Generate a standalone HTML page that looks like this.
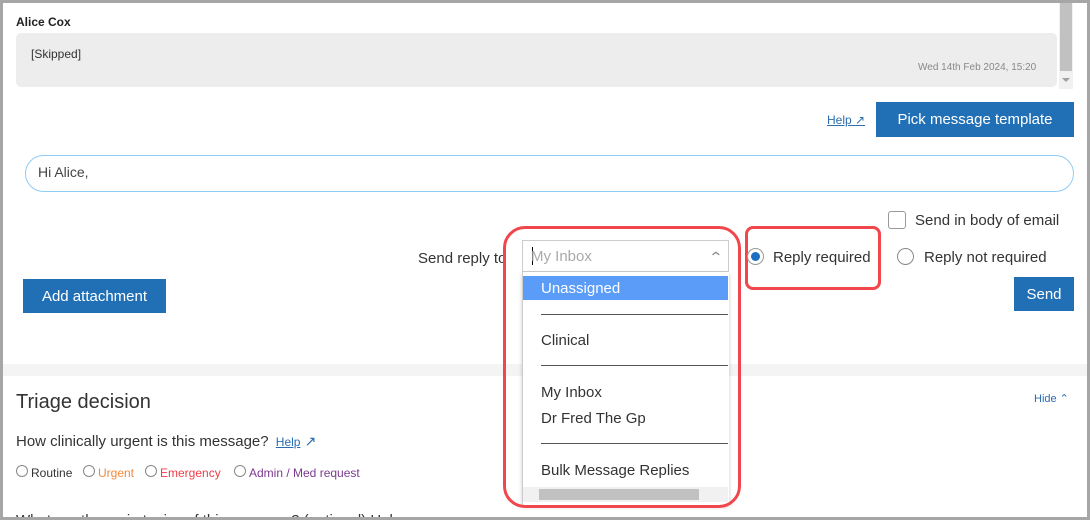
<!DOCTYPE html>
<html><head><meta charset="utf-8"><style>
*{box-sizing:border-box;margin:0;padding:0}
body{width:1090px;height:520px;overflow:hidden;background:#a6a6a6;font-family:"Liberation Sans",sans-serif;color:#333;position:relative}
.pg{position:absolute;left:3px;top:3px;width:1084px;height:514px;background:#fff;overflow:hidden}
.a{position:absolute;white-space:nowrap}
.btn{position:absolute;background:#2170b5;color:#fff;font-size:15px;display:flex;align-items:center;justify-content:center}
.rad{position:absolute;border:1px solid #888;border-radius:50%;background:#fff}
.help{color:#2a6db0;text-decoration:underline;font-size:12px}
</style></head><body><div class="pg">
<div class="a" style="left:0;top:361px;width:1084px;height:12px;background:#f4f4f4"></div>
<div class="a" style="left:13px;top:12px;font-size:12px;font-weight:bold;color:#222">Alice Cox</div>
<div class="a" style="left:13px;top:30px;width:1041px;height:54px;background:#ededed;border-radius:5px"></div>
<div class="a" style="left:28px;top:44px;font-size:12px;color:#333">[Skipped]</div>
<div class="a" style="left:915px;top:59px;font-size:10px;color:#888">Wed 14th Feb 2024, 15:20</div>
<div class="a" style="left:1056px;top:0;width:14px;height:86px;background:#f1f1f1"></div>
<div class="a" style="left:1057px;top:0;width:12px;height:68px;background:#c1c1c1"></div>
<div class="a" style="left:1059px;top:75px;width:0;height:0;border-left:4px solid transparent;border-right:4px solid transparent;border-top:4px solid #a0a0a0"></div>
<div class="a help" style="left:824px;top:110px">Help <span style="text-decoration:none">↗</span></div>
<div class="btn" style="left:873px;top:99px;width:198px;height:35px">Pick message template</div>
<div class="a" style="left:22px;top:152px;width:1049px;height:37px;border:1px solid #8ecdf5;border-radius:19px"></div>
<div class="a" style="left:35px;top:161px;font-size:14px;color:#444">Hi Alice,</div>
<div class="a" style="left:885px;top:208px;width:18px;height:18px;border:1px solid #999;border-radius:3px"></div>
<div class="a" style="left:912px;top:209px;font-size:15px;color:#333">Send in body of email</div>
<div class="a" style="left:415px;top:247px;font-size:15px;color:#333">Send reply to</div>
<div class="a" style="left:519px;top:237px;width:207px;height:32px;border:1px solid #ccc;background:#fff"></div>
<div class="a" style="left:529px;top:244px;width:1px;height:18px;background:#000"></div>
<div class="a" style="left:528px;top:245px;font-size:15px;color:#aaa">My Inbox</div>
<div class="a" style="left:707px;top:246px;font-size:14px;color:#888;transform:scaleX(1.3)">&#x2303;</div>
<div class="a" style="left:519px;top:269px;width:207px;height:233px;background:#fff;border-left:1px solid #ccc;box-shadow:0 2px 4px rgba(0,0,0,.2)"></div>
<div class="a" style="left:520px;top:273px;width:205px;height:24px;background:#5a9cf8"></div>
<div class="a" style="left:538px;top:277px;font-size:15px;color:#fff">Unassigned</div>
<div class="a" style="left:538px;top:311px;width:187px;height:1px;background:#555"></div>
<div class="a" style="left:538px;top:329px;font-size:15px;color:#333">Clinical</div>
<div class="a" style="left:538px;top:362px;width:187px;height:1px;background:#555"></div>
<div class="a" style="left:538px;top:381px;font-size:15px;color:#333">My Inbox</div>
<div class="a" style="left:538px;top:407px;font-size:15px;color:#333">Dr Fred The Gp</div>
<div class="a" style="left:538px;top:440px;width:187px;height:1px;background:#555"></div>
<div class="a" style="left:538px;top:459px;font-size:15px;color:#333">Bulk Message Replies</div>
<div class="a" style="left:520px;top:484px;width:205px;height:15px;background:#f1f1f1"></div>
<div class="a" style="left:536px;top:486px;width:160px;height:11px;background:#c1c1c1"></div>
<div class="a" style="left:500px;top:223px;width:238px;height:282px;border:3px solid #f0474c;border-radius:22px"></div>
<div class="a" style="left:742px;top:223px;width:136px;height:64px;border:3px solid #f0474c;border-radius:8px"></div>
<div class="rad" style="left:744px;top:245px;width:17px;height:17px;border-color:#999"><div style="margin:3px;width:9px;height:9px;border-radius:50%;background:#1b6ec2"></div></div>
<div class="a" style="left:770px;top:246px;font-size:15px;color:#333">Reply required</div>
<div class="rad" style="left:894px;top:245px;width:17px;height:17px"></div>
<div class="a" style="left:921px;top:246px;font-size:15px;color:#333">Reply not required</div>
<div class="btn" style="left:20px;top:276px;width:143px;height:34px">Add attachment</div>
<div class="btn" style="left:1011px;top:274px;width:60px;height:34px">Send</div>
<div class="a" style="left:13px;top:388px;font-size:20px;color:#333">Triage decision</div>
<div class="a" style="left:1031px;top:389px;font-size:11px;color:#2a6db0">Hide &#x2303;</div>
<div class="a" style="left:13px;top:430px;font-size:15px;color:#333">How clinically urgent is this message? <span class="help" style="margin-left:3px">Help</span> <span style="color:#2a6db0;font-size:14px">↗</span></div>
<div class="rad" style="left:13px;top:462px;width:12px;height:12px"></div>
<div class="a" style="left:28px;top:463px;font-size:12px;color:#333">Routine</div>
<div class="rad" style="left:80px;top:462px;width:12px;height:12px"></div>
<div class="a" style="left:95px;top:463px;font-size:12px;color:#f08a3c">Urgent</div>
<div class="rad" style="left:142px;top:462px;width:12px;height:12px"></div>
<div class="a" style="left:157px;top:463px;font-size:12px;color:#f03e4a">Emergency</div>
<div class="rad" style="left:231px;top:462px;width:12px;height:12px"></div>
<div class="a" style="left:246px;top:463px;font-size:12px;color:#7b3a8e">Admin / Med request</div>
<div class="a" style="left:13px;top:509px;font-size:15px;color:#333">What are the main topics of this message? (optional) Help</div>
</div></body></html>
